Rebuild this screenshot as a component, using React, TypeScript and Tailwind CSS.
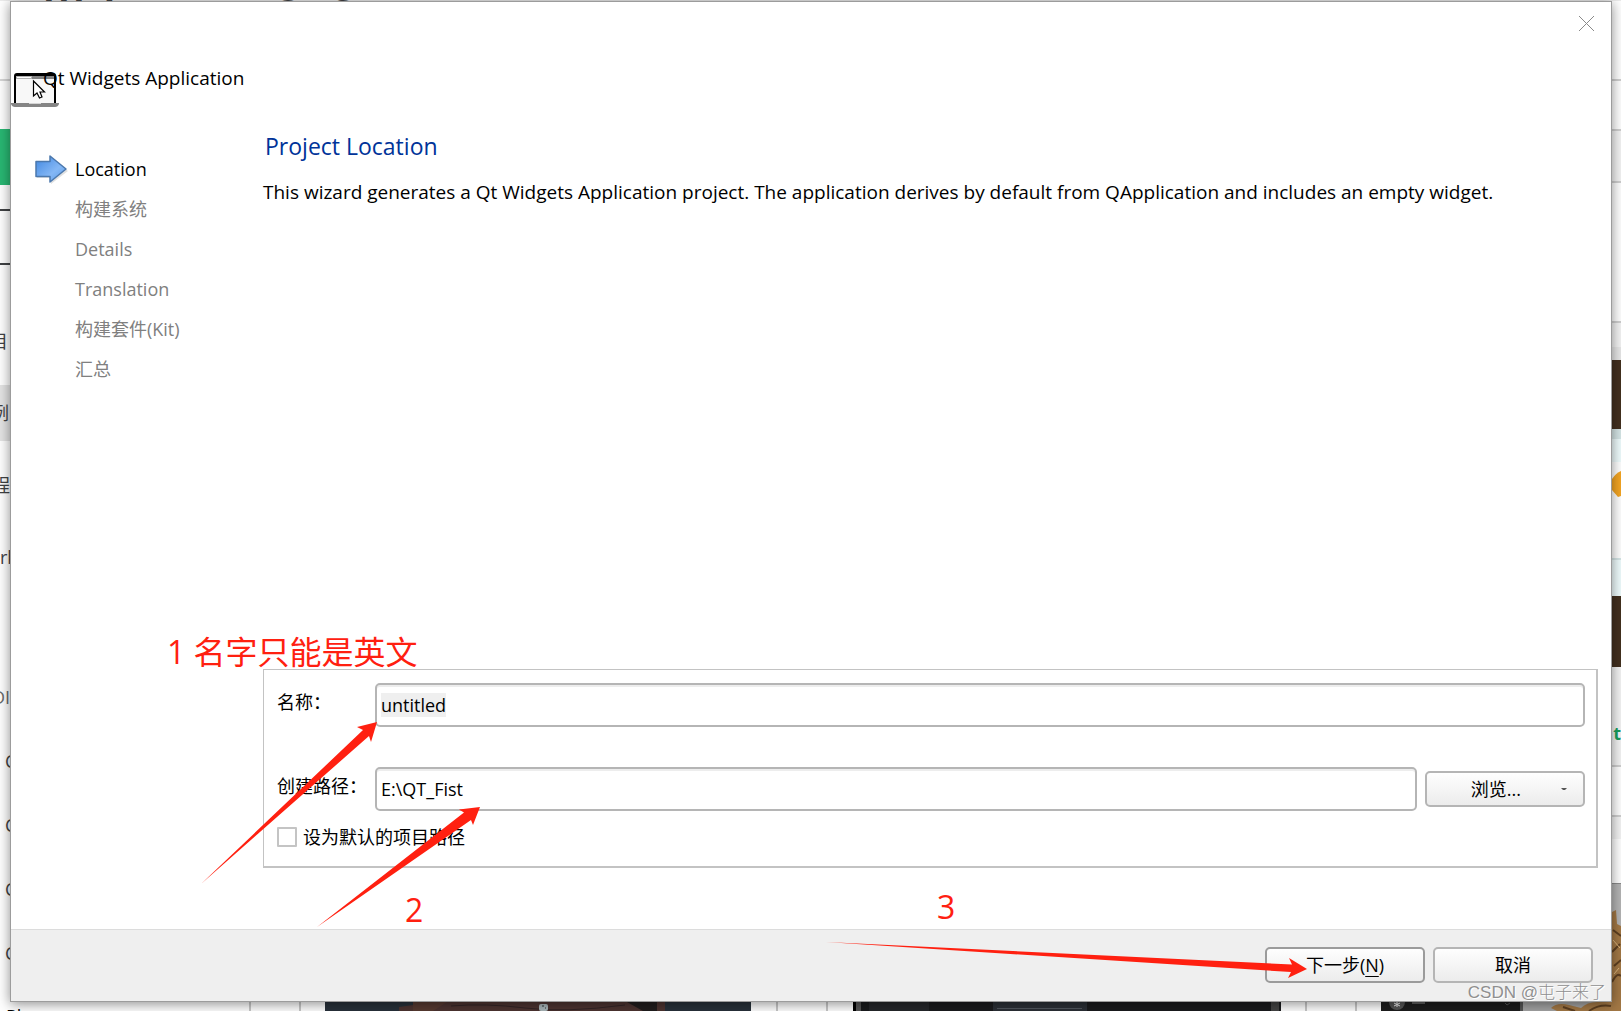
import React from 'react';
import { clsx } from 'clsx';

interface StripCell {
  size: string;
  tone: string;
  text?: string;
}

const STEPS = ['Location', '构建系统', 'Details', 'Translation', '构建套件(Kit)', '汇总'];

// Welcome page sidebar, visible left of the dialog
const LEFT_CELLS: StripCell[] = [
  { size: 'h-[78px]', tone: 'bg-white' },
  { size: 'h-[2px]', tone: 'bg-[#d6d6d6]' },
  { size: 'h-12', tone: 'bg-white' },
  { size: 'h-14', tone: 'bg-[#29b873]' },
  { size: 'h-6', tone: 'bg-white' },
  { size: 'h-[2px]', tone: 'bg-[#404244]' },
  { size: 'h-[52px]', tone: 'bg-white' },
  { size: 'h-[2px]', tone: 'bg-[#404244]' },
  { size: 'h-12', tone: 'bg-white' },
  { size: 'h-[72px]', tone: 'bg-white justify-end pr-[2px] pb-4', text: '项目' },
  { size: 'h-14', tone: 'bg-[#e4e4e4] justify-end pr-px', text: '示例' },
  { size: 'h-[88px]', tone: 'bg-white justify-end', text: '教程' },
  { size: 'h-14', tone: 'bg-white', text: 'rket' },
  { size: 'h-[84px]', tone: 'bg-white' },
  { size: 'h-14', tone: 'bg-white justify-end text-[#6b6b6b]', text: 'DI' },
  { size: 'h-[4px]', tone: 'bg-white' },
  { size: 'h-16', tone: 'bg-white pl-[5px]', text: 'C' },
  { size: 'h-16', tone: 'bg-white pl-[5px]', text: 'C' },
  { size: 'h-16', tone: 'bg-white pl-[5px]', text: 'C' },
  { size: 'h-16', tone: 'bg-white pl-[5px]', text: 'C' },
];

// Example cards, visible right of the dialog
const RIGHT_CELLS_TOP: StripCell[] = [
  { size: 'h-[78px]', tone: 'bg-white' },
  { size: 'h-[2px]', tone: 'bg-[#d0d0d0]' },
  { size: 'h-12', tone: 'bg-white' },
  { size: 'h-[2px]', tone: 'bg-[#d0d0d0]' },
  { size: 'h-[50px]', tone: 'bg-[#f4f4f4]' },
  { size: 'h-[2px]', tone: 'bg-[#d0d0d0]' },
  { size: 'h-[138px]', tone: 'bg-white' },
  { size: 'h-[2px]', tone: 'bg-[#d0d0d0]' },
  { size: 'h-6', tone: 'bg-[#f4f4f4]' },
  { size: 'h-[13px]', tone: 'bg-[#e8e8e8]' },
  { size: 'h-[69px]', tone: 'bg-[#43301f]' },
  { size: 'h-[10px]', tone: 'bg-[#d6e6e7]' },
  { size: 'h-[23px]', tone: 'bg-[#effcfd]' },
  { size: 'h-[9px]', tone: 'bg-white' },
];

const RIGHT_CELLS_BOTTOM: StripCell[] = [
  { size: 'h-[60px]', tone: 'bg-white' },
  { size: 'h-[2px]', tone: 'bg-[#d6e6e7]' },
  { size: 'h-9', tone: 'bg-[#effcfd]' },
  { size: 'h-[71px]', tone: 'bg-[#43301f]' },
  { size: 'h-[34px]', tone: 'bg-[#f4f4f4]' },
  { size: 'h-16', tone: 'bg-[#f4f4f4] justify-end font-bold text-[#17a05d]', text: 'at' },
  { size: 'h-[2px]', tone: 'bg-[#d0d0d0]' },
  { size: 'h-12', tone: 'bg-white' },
  { size: 'h-[2px]', tone: 'bg-[#d0d0d0]' },
  { size: 'h-[22px]', tone: 'bg-[#f4f4f4]' },
  { size: 'h-[44px]', tone: 'bg-white' },
  { size: 'h-px', tone: 'bg-[#8a8a8a]' },
];

const BUTTON =
  'flex h-9 w-40 items-center justify-center rounded-[5px] border-2 bg-gradient-to-b from-[#fefefe] to-[#ececec]';
const FIELD =
  'flex h-11 items-center rounded-[5px] border-2 border-[#b5b5b5] bg-white px-1 shadow-[inset_0_2px_0_#ededed]';

const Cell: React.FC<{ cell: StripCell }> = ({ cell }) => (
  <div className={clsx('flex shrink-0 items-center overflow-hidden whitespace-nowrap', cell.size, cell.tone)}>
    {cell.text}
  </div>
);

const LaptopIcon = () => (
  <svg className="absolute top-[70px] left-0" width="48" height="36" viewBox="0 0 48 36" aria-hidden="true">
    <path d="M4 32V4Q4 2 6 2H42Q44 2 44 4V32Z" fill="#f8f8f8" stroke="#000" strokeWidth="2" />
    <path d="M5 3H43" stroke="#000" strokeWidth="2" />
    <path d="M5 5.500H21" stroke="#b4b4b4" strokeWidth="3" />
    <path d="M6 5.500H20" stroke="#fff" strokeWidth="1" />
    <path d="M21 5.500H43" stroke="#838383" strokeWidth="3" />
    <path d="M0 31H48V32Q47 35 44 35H4Q1 35 0 32Z" fill="#858585" />
    <path d="M18 31H30V32H18Z" fill="#d5d5d5" />
    <path
      d="M22.500 9V24L26 21L28.500 26L31 25L29 20H33.500Z"
      fill="#fff"
      stroke="#000"
      strokeWidth="1.200"
    />
  </svg>
);

const StepArrow = () => (
  <svg width="33" height="32" viewBox="0 0 33 32" className="shrink-0" aria-hidden="true">
    <defs>
      <linearGradient id="stepFill" x1="0" y1="0" x2="1" y2="1">
        <stop offset="0" stopColor="#3f86e0" />
        <stop offset="0.600" stopColor="#84b7f5" />
        <stop offset="1" stopColor="#5a9be8" />
      </linearGradient>
    </defs>
    <path d="M2 10H16V4L33 18L16 31V25H2Z" fill="#000" opacity="0.120" />
    <path
      d="M1 8.500H15V3L31 16L15 29V23.500H1Z"
      fill="url(#stepFill)"
      stroke="#4b78ad"
      strokeWidth="1.500"
      strokeLinejoin="round"
    />
  </svg>
);

function Dialog() {
  return (
    <main className="relative flex min-w-0 flex-1 flex-col border border-[#9c9c9c] bg-white shadow-[0_2px_12px_rgba(0,0,0,0.450)]">
      <button type="button" aria-label="Close" className="mt-[11px] mr-[14px] self-end p-[3px]">
        <svg width="15" height="15" viewBox="0 0 15 15" aria-hidden="true">
          <path d="M0 0L15 15M15 0L0 15" stroke="#8a8a8a" strokeWidth="1" />
        </svg>
      </button>

      <LaptopIcon />
      <div className="relative mt-8 h-6 pl-8 text-[19px] leading-6">Qt Widgets Application</div>

      <div className="mt-8 flex flex-1">
        <nav className="w-[252px] shrink-0 pt-[27px]">
          <ol>
            {STEPS.map((step, idx) => (
              <li
                key={step}
                className={clsx(
                  'flex h-10 items-center',
                  idx === 0 ? 'gap-[7px] pl-6 text-black' : 'pl-16 text-[#808080]'
                )}
              >
                {idx === 0 && <StepArrow />}
                {step}
              </li>
            ))}
          </ol>
        </nav>

        <section className="flex min-w-0 flex-1 flex-col pr-[13px]">
          <h1 className="mt-2 pl-[2px] text-[23px] leading-8 text-[#003399]">Project Location</h1>
          <p className="mt-[18px] text-[19px] leading-6">
            This wizard generates a Qt Widgets Application project. The application derives by default from
            QApplication and includes an empty widget.
          </p>

          <form className="mt-auto mb-[61px] flex h-[199px] flex-col border border-r-2 border-b-2 border-[#c3c3c3] pt-[13px] pr-[11px] pl-[13px]">
            <div className="flex items-center">
              <label htmlFor="name" className="w-[98px] shrink-0 pb-[6px]">
                名称：
              </label>
              <div className={clsx(FIELD, 'flex-1')}>
                <input
                  id="name"
                  type="text"
                  defaultValue="untitled"
                  className="field-sizing-content h-6 bg-[#efefef] outline-none"
                />
              </div>
            </div>

            <div className="mt-10 flex items-center">
              <label htmlFor="path" className="w-[98px] shrink-0 pb-[6px]">
                创建路径：
              </label>
              <div className={clsx(FIELD, 'mr-2 flex-1')}>
                <input id="path" type="text" defaultValue="E:\QT_Fist" className="w-full outline-none" />
              </div>
              <button type="button" className={clsx(BUTTON, 'justify-end border-[#b5b5b5] pr-4')}>
                <span className="mr-10">浏览...</span>
                <svg width="6" height="3" viewBox="0 0 6 3" aria-hidden="true">
                  <path d="M0 0H6L4 2H2Z" fill="#555" />
                </svg>
              </button>
            </div>

            <label className="mt-[14px] flex items-center gap-[6px] leading-6">
              <input type="checkbox" className="size-5 appearance-none rounded-[1px] border-2 border-[#c4c4c4]" />
              设为默认的项目路径
            </label>
          </form>
        </section>
      </div>

      <footer className="flex h-[72px] justify-end gap-2 border-t border-[#dcdcdc] bg-[#efefef] pt-[17px] pr-[18px]">
        <button type="button" className={clsx(BUTTON, 'border-[#9b9b9b]')}>
          下一步(<u className="underline-offset-4">N</u>)
        </button>
        <button type="button" className={clsx(BUTTON, 'border-[#b5b5b5]')}>
          取消
        </button>
      </footer>

      <Annotations />
    </main>
  );
}

// Red hand-drawn notes that float over the dialog
function Annotations() {
  return (
    <div className="pointer-events-none absolute inset-0 text-[32px] leading-10 text-[#ff2010]">
      <span className="absolute bottom-[329px] left-[156px] whitespace-nowrap">1 名字只能是英文</span>
      <span className="absolute bottom-[71px] left-[394px]">2</span>
      <span className="absolute bottom-[74px] left-[926px]">3</span>

      <svg className="absolute bottom-[117px] left-[190px]" width="176" height="162" viewBox="0 0 176 162" aria-hidden="true">
        <path d="M0 162L162 8L156 5L176 0L170 20L168 14Z" fill="#ff2010" />
      </svg>
      <svg className="absolute bottom-[74px] left-[306px]" width="164" height="120" viewBox="0 0 164 120" aria-hidden="true">
        <path d="M0 120L147 5.500L142 2.500L163 0L156 18L154 13Z" fill="#ff2010" />
      </svg>
      <svg className="absolute bottom-[22px] left-[815px]" width="481" height="38" viewBox="0 0 481 38" aria-hidden="true">
        <path d="M0 1L466 23.500L463 17L481 28L462 37L465 31Z" fill="#ff2010" />
      </svg>
    </div>
  );
}

// Cards of the welcome page peeking out under the dialog
function BottomStrip() {
  return (
    <div className="flex h-[9px] shrink-0 overflow-hidden bg-white">
      <div className="w-[249px] pt-[6px] pl-[6px] leading-4">Pl</div>
      <div className="w-[2px] bg-[#c8c8c8]" />
      <div className="w-12" />
      <div className="w-[2px] bg-[#c8c8c8]" />
      <div className="w-6" />
      <svg width="426" height="9" viewBox="0 0 426 9" className="shrink-0" aria-hidden="true">
        <rect width="426" height="9" fill="#28313a" />
        <path d="M74 9V5L88 3V0H340V9Z" fill="#4d3431" />
        <path d="M108 9L122 0H88V9Z" fill="#573a31" />
        <path d="M302 0H332V9H318Z" fill="#211d1d" />
        <path d="M126 4Q160 1 200 6T300 3" stroke="#332425" fill="none" />
        <rect x="214" y="2" width="9" height="7" rx="2" fill="#a9b6b9" />
        <path d="M217 4h2M220 6h1" stroke="#30383b" />
      </svg>
      <div className="w-[25px]" />
      <div className="w-[2px] bg-[#c8c8c8]" />
      <div className="w-12" />
      <div className="w-[2px] bg-[#c8c8c8]" />
      <div className="w-[25px]" />
      <svg width="428" height="9" viewBox="0 0 428 9" className="shrink-0" aria-hidden="true">
        <rect width="428" height="9" fill="#1a1b1d" />
        <rect width="3" height="9" fill="#000" />
        <rect x="3" width="5" height="9" fill="#555" />
        <rect x="16" width="60" height="9" fill="#25272a" />
        <rect x="140" width="94" height="9" fill="#2b3036" />
        <path d="M144 6.500H229" stroke="#50565c" />
        <rect x="418" width="8" height="9" fill="#444" />
      </svg>
      <div className="w-6" />
      <div className="w-[2px] bg-[#c8c8c8]" />
      <div className="w-12" />
      <div className="w-[2px] bg-[#c8c8c8]" />
      <div className="w-6" />
      <svg width="142" height="9" viewBox="0 0 142 9" className="shrink-0" aria-hidden="true">
        <rect width="142" height="9" fill="#1d1d1d" />
        <circle cx="16" cy="0" r="8" fill="#555" />
        <path d="M16 0V5M13 1L19 4M19 1L13 4" stroke="#eee" />
        <path d="M31 1H44" stroke="#999" />
        <path d="M124 1L126 3L129 1" stroke="#555" fill="none" />
        <rect x="139" width="3" height="9" fill="#555" />
      </svg>
      <svg className="h-[9px] flex-1" viewBox="0 0 98 9" preserveAspectRatio="none" aria-hidden="true">
        <rect width="98" height="9" fill="#a3a3a3" />
        <path d="M28 6Q34 0 46 3L58 6Q64 0 74 0H98V9H34Z" fill="#a37845" />
        <path d="M40 5L52 9M66 9Q76 2 88 4" stroke="#5f4021" strokeWidth="2" fill="none" />
      </svg>
    </div>
  );
}

export default function App() {
  return (
    <div className="relative flex min-h-screen flex-col bg-white font-['Open_Sans','Noto_Sans_CJK_SC',sans-serif] text-[18px] text-black">
      <div className="h-px shrink-0 overflow-hidden bg-[#ececec] pl-[46px] text-[37px] leading-[26px] font-bold text-[#404244]">
        Welcome to Qt Creator
      </div>

      <div className="flex flex-1">
        <aside className="flex w-[10px] shrink-0 flex-col text-[#404244]">
          {LEFT_CELLS.map((cell, idx) => (
            <Cell key={idx} cell={cell} />
          ))}
        </aside>

        <Dialog />

        <aside className="flex w-[9px] shrink-0 flex-col">
          {RIGHT_CELLS_TOP.map((cell, idx) => (
            <Cell key={idx} cell={cell} />
          ))}
          <svg width="9" height="27" viewBox="0 0 9 27" className="shrink-0" aria-hidden="true">
            <path d="M9 0Q4 2 0 8V19L6 26L9 25Z" fill="#f5a623" />
          </svg>
          {RIGHT_CELLS_BOTTOM.map((cell, idx) => (
            <Cell key={idx} cell={cell} />
          ))}
          <svg className="w-[9px] flex-1" viewBox="0 0 9 118" preserveAspectRatio="none" aria-hidden="true">
            <rect width="9" height="118" fill="#b5b5b5" />
            <path d="M0 28L4 26L5 40L9 42V118H0Z" fill="#a37845" />
            <path d="M1 46L9 52M0 68L8 60M2 82L9 76M0 98Q5 88 9 92" stroke="#5f4021" strokeWidth="2" fill="none" />
            <path d="M1 56L8 64M2 90L7 84" stroke="#e0b980" fill="none" />
          </svg>
        </aside>
      </div>

      <BottomStrip />

      <div className="absolute right-[15px] bottom-[6px] font-['Liberation_Sans','Noto_Sans_CJK_SC',sans-serif] text-[17px] leading-6 font-light text-[#8f8f8f] [text-shadow:1px_1px_0_#fff]">
        CSDN @屯子来了
      </div>
    </div>
  );
}
